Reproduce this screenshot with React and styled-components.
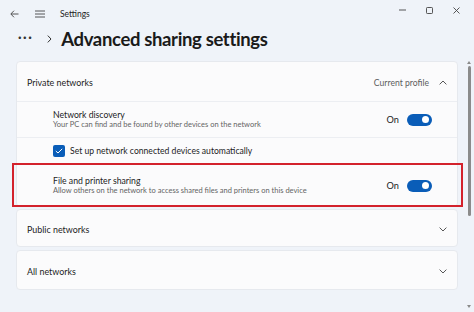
import React from 'react';
import styled, { createGlobalStyle } from 'styled-components';

const GlobalStyle = createGlobalStyle`
  html, body {
    margin: 0;
    padding: 0;
    background: #eef2f8;
  }
  body {
    font-family: Lato, "Noto Sans", sans-serif;
    color: #1b1b1b;
  }
`;

const Window = styled.div`
  width: 474px;
  height: 312px;
  display: flex;
  flex-direction: column;
  overflow: hidden;
  background: #eff3f9;
`;

const TitleBar = styled.div`
  height: 28px;
  display: flex;
  align-items: center;
  padding-left: 9px;
`;

const TitleIcon = styled.div`
  width: 11px;
  height: 11px;
  margin-right: ${p => p.gap || 13}px;
  display: flex;
  align-items: center;
  justify-content: center;
  color: #333;
`;

const AppName = styled.span`
  font-size: 8.5px;
  color: #222;
`;

const WindowControls = styled.div`
  margin-left: auto;
  margin-right: 4px;
  display: flex;
  align-items: center;
  height: 100%;
  margin-top: -8px;
`;

const ControlButton = styled.div`
  width: 27px;
  display: flex;
  justify-content: center;
  align-items: center;
  color: #333;
`;

const Breadcrumb = styled.div`
  height: 26px;
  display: flex;
  align-items: center;
  padding-left: 18px;
  margin-top: -2px;
`;

const Ellipsis = styled.span`
  font-size: 13px;
  letter-spacing: 1.5px;
  color: #333;
  margin-right: 14px;
  margin-top: -4px;
  font-weight: 700;
`;

const Chevron = styled.span`
  display: flex;
  margin-right: 9px;
  color: #333;
`;

const PageTitle = styled.h1`
  margin: 0;
  font-size: 18.5px;
  font-weight: 700;
  letter-spacing: -0.35px;
  color: #1a1a1a;
`;

const Body = styled.div`
  flex: 1;
  display: flex;
  margin-top: 9px;
`;

const Column = styled.div`
  width: 442px;
  margin-left: 16px;
  display: flex;
  flex-direction: column;
`;

const Card = styled.div`
  background: #fbfbfc;
  border: 1px solid #e6e9ee;
  border-radius: 4px;
  display: flex;
  flex-direction: column;
  margin-top: ${p => p.mt || 0}px;
`;

const HeaderRow = styled.div`
  height: ${p => p.h || 39}px;
  display: flex;
  align-items: center;
  padding: 2px 10px 0 10px;
  box-sizing: border-box;
  border-bottom: ${p => (p.open ? '1px solid #eceef2' : 'none')};
`;

const HeaderLabel = styled.span`
  font-size: 8.9px;
  color: #1c1c1c;
`;

const HeaderRight = styled.div`
  margin-left: auto;
  display: flex;
  align-items: center;
  gap: 10px;
  font-size: 8.6px;
  color: #5d5d5d;
`;

const SettingRow = styled.div`
  position: relative;
  height: ${p => p.h}px;
  display: flex;
  align-items: center;
  padding: 0 25px 0 36px;
  border-bottom: ${p => (p.last ? 'none' : '1px solid #eceef2')};

  ${p =>
    p.highlight &&
    `
    &::after {
      content: '';
      position: absolute;
      left: -5px;
      right: -6px;
      top: -2px;
      bottom: -1px;
      border: 2px solid #d3222c;
    }
  `}
`;

const TextBlock = styled.div`
  display: flex;
  flex-direction: column;
`;

const RowTitle = styled.span`
  font-size: 8.7px;
  color: #1c1c1c;
  line-height: 11px;
`;

const RowSub = styled.span`
  font-size: 7.5px;
  color: #646464;
  line-height: 10px;
`;

const ToggleWrap = styled.div`
  margin-left: auto;
  display: flex;
  align-items: center;
  gap: 8px;
  font-size: 9.2px;
  color: #1c1c1c;
`;

const Toggle = styled.div`
  width: 25px;
  height: 12px;
  border-radius: 6px;
  background: #0a5db8;
  position: relative;

  &::after {
    content: '';
    position: absolute;
    right: 3px;
    top: 2.5px;
    width: 7px;
    height: 7px;
    border-radius: 50%;
    background: #fff;
  }
`;

const CheckBox = styled.div`
  width: 12px;
  height: 12px;
  border-radius: 2px;
  background: #0a5db8;
  display: flex;
  align-items: center;
  justify-content: center;
  margin-right: 5px;
`;

const CheckLabel = styled.span`
  font-size: 8.6px;
  color: #1c1c1c;
`;

const ScrollBar = styled.div`
  width: 8px;
  margin-left: 7px;
  display: flex;
  flex-direction: column;
  align-items: center;
`;

const ScrollArrow = styled.div`
  width: 0;
  height: 0;
  border-left: 2.5px solid transparent;
  border-right: 2.5px solid transparent;
  ${p =>
    p.down
      ? 'border-top: 3px solid #8a8a8a; margin-top: auto; margin-bottom: 4px;'
      : 'border-bottom: 3px solid #8a8a8a; margin-bottom: 2px;'}
`;

const Thumb = styled.div`
  width: 3px;
  height: 150px;
  border-radius: 2px;
  background: #8b8b8b;
`;

const ChevronIcon = ({ up }) => (
  <svg width="8" height="5" viewBox="0 0 8 5">
    <path
      d={up ? 'M0.6 4.4 L4 1 L7.4 4.4' : 'M0.6 0.6 L4 4 L7.4 0.6'}
      fill="none"
      stroke="#444"
      strokeWidth="0.9"
    />
  </svg>
);

const Switch = () => (
  <ToggleWrap>
    On
    <Toggle />
  </ToggleWrap>
);

export default function App() {
  return (
    <>
      <GlobalStyle />
      <Window>
        <TitleBar>
          <TitleIcon gap={14}>
            <svg width="9" height="8" viewBox="0 0 9 8">
              <path d="M8.5 4 H1 M4 0.7 L0.8 4 L4 7.3" fill="none" stroke="#444" strokeWidth="0.9" />
            </svg>
          </TitleIcon>
          <TitleIcon gap={15}>
            <svg width="10" height="8" viewBox="0 0 10 8">
              <path d="M0 1 H10 M0 4 H10 M0 7 H10" fill="none" stroke="#444" strokeWidth="0.9" />
            </svg>
          </TitleIcon>
          <AppName>Settings</AppName>
          <WindowControls>
            <ControlButton>
              <svg width="7" height="2" viewBox="0 0 7 2">
                <path d="M0 1 H7" stroke="#444" strokeWidth="0.9" />
              </svg>
            </ControlButton>
            <ControlButton>
              <svg width="7" height="7" viewBox="0 0 7 7">
                <rect x="0.5" y="0.5" width="6" height="6" rx="0.8" fill="none" stroke="#444" strokeWidth="0.9" />
              </svg>
            </ControlButton>
            <ControlButton>
              <svg width="7" height="7" viewBox="0 0 7 7">
                <path d="M0.5 0.5 L6.5 6.5 M6.5 0.5 L0.5 6.5" stroke="#444" strokeWidth="0.9" />
              </svg>
            </ControlButton>
          </WindowControls>
        </TitleBar>

        <Breadcrumb>
          <Ellipsis>···</Ellipsis>
          <Chevron>
            <svg width="5" height="8" viewBox="0 0 5 8">
              <path d="M0.8 0.6 L4 4 L0.8 7.4" fill="none" stroke="#333" strokeWidth="1" />
            </svg>
          </Chevron>
          <PageTitle>Advanced sharing settings</PageTitle>
        </Breadcrumb>

        <Body>
          <Column>
            <Card>
              <HeaderRow open h={40}>
                <HeaderLabel>Private networks</HeaderLabel>
                <HeaderRight>
                  Current profile
                  <ChevronIcon up />
                </HeaderRight>
              </HeaderRow>
              <SettingRow h={35}>
                <TextBlock>
                  <RowTitle>Network discovery</RowTitle>
                  <RowSub>Your PC can find and be found by other devices on the network</RowSub>
                </TextBlock>
                <Switch />
              </SettingRow>
              <SettingRow h={26}>
                <CheckBox>
                  <svg width="8" height="6" viewBox="0 0 8 6">
                    <path d="M0.8 3 L3 5 L7.2 0.8" fill="none" stroke="#fff" strokeWidth="1" />
                  </svg>
                </CheckBox>
                <CheckLabel>Set up network connected devices automatically</CheckLabel>
              </SettingRow>
              <SettingRow h={41} last highlight>
                <TextBlock>
                  <RowTitle>File and printer sharing</RowTitle>
                  <RowSub>Allow others on the network to access shared files and printers on this device</RowSub>
                </TextBlock>
                <Switch />
              </SettingRow>
            </Card>

            <Card mt={2}>
              <HeaderRow h={36}>
                <HeaderLabel>Public networks</HeaderLabel>
                <HeaderRight>
                  <ChevronIcon />
                </HeaderRight>
              </HeaderRow>
            </Card>

            <Card mt={3}>
              <HeaderRow h={38}>
                <HeaderLabel>All networks</HeaderLabel>
                <HeaderRight>
                  <ChevronIcon />
                </HeaderRight>
              </HeaderRow>
            </Card>
          </Column>
          <ScrollBar>
            <ScrollArrow />
            <Thumb />
            <ScrollArrow down />
          </ScrollBar>
        </Body>
      </Window>
    </>
  );
}
